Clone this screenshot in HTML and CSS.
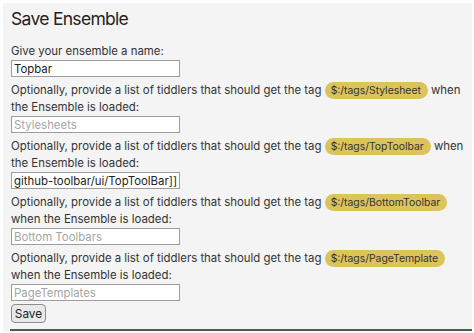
FILE: index.html
```html
<!DOCTYPE html>
<html lang="en">
<head>
  <meta charset="UTF-8">
  <title>Save Ensemble</title>
  <link rel="stylesheet" href="styles.css">
</head>
<body>

  <div class="panel">
    <h2>Save Ensemble</h2>
    <form id="ensembleForm">
      <div class="field">
        <label for="name">Give your ensemble a name:</label>
        <input id="name" value="Topbar">
      </div>

      <div class="field">
        <label for="styles">Optionally, provide a list of tiddlers that should get the tag <span class="tag">$:/tags/Stylesheet</span> when the Ensemble is loaded:</label>
        <input id="styles" placeholder="Stylesheets">
      </div>

      <div class="field">
        <label for="topbars">Optionally, provide a list of tiddlers that should get the tag <span class="tag">$:/tags/TopToolbar</span> when the Ensemble is loaded:</label>
        <input id="topbars" value="[[$:/plugins/github-toolbar/ui/TopToolBar]]">
      </div>

      <div class="field">
        <label for="bottombars">Optionally, provide a list of tiddlers that should get the tag <span class="tag">$:/tags/BottomToolbar</span> when the Ensemble is loaded:</label>
        <input id="bottombars" placeholder="Bottom Toolbars">
      </div>

      <div class="field">
        <label for="templates">Optionally, provide a list of tiddlers that should get the tag <span class="tag">$:/tags/PageTemplate</span> when the Ensemble is loaded:</label>
        <input id="templates" placeholder="PageTemplates">
      </div>

      <button type="submit">Save</button>
    </form>
    <hr>
  </div>

  <script>
    // keep the end of the long value in view, as after typing it
    var topInput = document.getElementById("topbars");
    topInput.scrollLeft = topInput.scrollWidth;
  </script>

</body>
</html>
```

FILE: styles.css
```css
body {
  margin: 0;
  background-color: #fff;
  font-family: Inter, "Liberation Sans", Arial, sans-serif;
  font-size: 11.4px;
  color: #333;
}

.panel {
  margin: 3px 2px 0 3px;
  background-color: #f4f4f4;
  padding: 1px 3px 1px 8px;
}

h2 {
  font-size: 17.5px;
  letter-spacing: -0.7px;
  font-weight: normal;
  color: #222;
  line-height: 22px;
  margin: 4px 0 13px;
}

.field {
  margin-bottom: 5px;
}

label {
  display: block;
  line-height: 17px;
}

.tag {
  display: inline-block;
  background-color: #dcc35a;
  color: #333;
  font-size: 10.4px;
  line-height: 17px;
  padding: 0 7px 0 6px;
  border-radius: 9px;
}

input {
  display: block;
  width: 169px;
  height: 17px;
  box-sizing: border-box;
  margin: 0;
  padding: 0 2px;
  font-family: inherit;
  font-size: 11.4px;
  color: #222;
  background-color: #fff;
  border: 1px solid #9d9d9d;
  border-radius: 0;
}

input::placeholder {
  color: #a5a5a5;
}

button {
  display: block;
  margin-top: -2px;
  width: 35px;
  height: 19px;
  padding: 0;
  font-family: inherit;
  font-size: 11.8px;
  color: #222;
  background-color: #e9e9e9;
  border: 1px solid #8c8c8c;
  border-radius: 4px;
}

hr {
  margin: 6px -3px 0 -1px;
  border: none;
  border-top: 2px solid #555;
}
```
